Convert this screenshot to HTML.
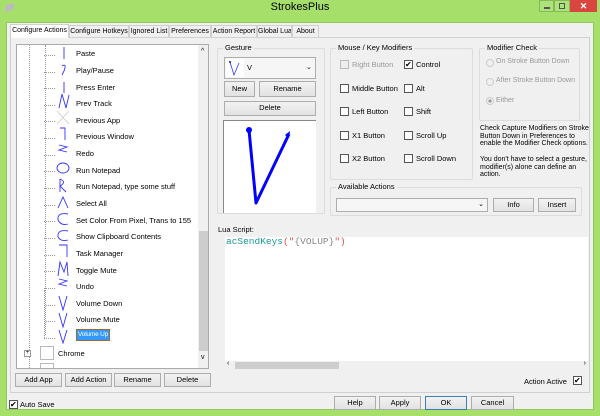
<!DOCTYPE html>
<html><head><style>
*{margin:0;padding:0;box-sizing:border-box}
body{width:600px;height:416px;overflow:hidden;background:#a6e06a;font-family:"Liberation Sans",sans-serif;font-size:7.5px;color:#000;position:relative}
.a{position:absolute}
.btn{position:absolute;background:linear-gradient(#f2f2f2,#e2e2e2);border:1px solid #adadad;text-align:center;font-size:7.5px;line-height:12px}
.grp{position:absolute;border:1px solid #dcdcdc;border-radius:2px}
.gl{position:absolute;top:-6px;left:5px;background:#f0f0f0;padding:0 2px;font-size:7.5px}
.cb{position:absolute;width:9px;height:9px;border:1px solid #555;background:#fff}
.lbl{position:absolute;font-size:7.5px;white-space:nowrap}
.item{position:absolute;left:76px;font-size:7.5px;white-space:nowrap}
.hl{position:absolute;left:44px;width:11px;border-top:1px dotted #999}
.tab{position:absolute;top:25px;height:12px;border:1px solid #d0d0d0;border-bottom:none;background:#f0f0f0;font-size:7px;line-height:11px;text-align:center;white-space:nowrap;overflow:hidden}
</style></head><body>
<div class="a" style="left:6px;top:22px;width:588px;height:388px;background:#f0f0f0;border:1px solid #8fc95a"></div>
<div class="a" style="left:0;top:1px;width:600px;text-align:center;font-size:11px;color:#000">StrokesPlus</div>
<div class="a" style="left:5px;top:4px;width:9px;height:7px;background:#bbb;border-radius:2px;transform:skewY(-20deg)"></div>
<div class="a" style="left:539px;top:0;width:15px;height:12px;border:1px solid #86b95a;background:#aee37a"><div class="a" style="left:4px;top:6px;width:6px;height:2px;border:1px solid #555"></div></div>
<div class="a" style="left:554px;top:0;width:16px;height:12px;border:1px solid #86b95a;background:#aee37a"><div class="a" style="left:4px;top:2px;width:6px;height:6px;border:1px solid #555"></div></div>
<div class="a" style="left:570px;top:0;width:27px;height:12px;background:#d9463f;color:#fff;text-align:center;font-size:9px;line-height:12px;font-weight:bold">✕</div>

<div class="a" style="left:10px;top:37px;width:580px;height:356px;border:1px solid #d0d0d0;background:#f0f0f0"></div>
<div class="tab" style="left:10px;width:59px;top:24px;height:14px;background:#fff;z-index:2">Configure Actions</div>
<div class="tab" style="left:69px;width:60px">Configure Hotkeys</div>
<div class="tab" style="left:129px;width:40px">Ignored List</div>
<div class="tab" style="left:169px;width:42px">Preferences</div>
<div class="tab" style="left:211px;width:46px">Action Report</div>
<div class="tab" style="left:257px;width:35px">Global Lua</div>
<div class="tab" style="left:292px;width:27px">About</div>

<div class="a" style="left:16px;top:44px;width:193px;height:325px;border:1px solid #aaa;background:#fff;overflow:hidden">
<div class="a" style="left:181px;top:0;width:11px;height:323px;background:#f0f0f0"></div>
<div class="a" style="left:182px;top:186px;width:9px;height:120px;background:#cdcdcd"></div>
<div class="a" style="left:184px;top:3px;font-size:7px">^</div>
<div class="a" style="left:184px;top:309px;font-size:7px">v</div>
<div class="a" style="left:12px;top:0;height:325px;border-left:1px dotted #999"></div>
<div class="a" style="left:28px;top:0;height:290px;border-left:1px dotted #999"></div>
</div>
<div class="a" style="left:76px;top:329px;width:34px;height:12px;background:#3399ff;border:1px solid #9a6a30;color:#fff;line-height:10px;white-space:nowrap;font-size:6.5px;letter-spacing:-0.2px;overflow:hidden;text-align:center">Volume Up</div>
<div class="a" style="left:24px;top:350px;width:7px;height:7px;border:1px solid #999;font-size:6px;line-height:5px;text-align:center;background:#fff">+</div>
<div class="a" style="left:40px;top:346px;width:14px;height:14px;border:1px solid #bbb;background:#fff"></div>
<div class="item" style="left:58px;top:349px">Chrome</div>
<div class="a" style="left:40px;top:363px;width:14px;height:5px;border:1px solid #bbb;border-bottom:none;background:#fff"></div>

<div class="btn" style="left:15px;top:373px;width:47px;height:14px">Add App</div>
<div class="btn" style="left:65px;top:373px;width:47px;height:14px">Add Action</div>
<div class="btn" style="left:114px;top:373px;width:47px;height:14px">Rename</div>
<div class="btn" style="left:164px;top:373px;width:47px;height:14px">Delete</div>

<div class="grp" style="left:217px;top:48px;width:108px;height:166px"><span class="gl" style="top:-6px">Gesture</span></div>
<div class="a" style="left:224px;top:57px;width:92px;height:22px;border:1px solid #adadad;background:#f6f6f6"></div>
<div class="a" style="left:226px;top:59px;width:18px;height:18px;background:#fff"><svg width="18" height="18"><path d="M4 3 L8 16 L13 4" stroke="#33f" fill="none" stroke-width="0.8"/><circle cx="4" cy="3" r="1" fill="#00f"/></svg></div>
<div class="lbl" style="left:247px;top:63px">V</div>
<div class="lbl" style="left:306px;top:63px;font-size:7px">⌄</div>
<div class="btn" style="left:224px;top:81px;width:31px;height:16px;line-height:14px">New</div>
<div class="btn" style="left:259px;top:81px;width:57px;height:16px;line-height:14px">Rename</div>
<div class="btn" style="left:224px;top:101px;width:92px;height:15px">Delete</div>
<div class="a" style="left:223px;top:120px;width:93px;height:93px;background:#fff;border-top:1px solid #888;border-left:1px solid #888">
<svg width="92" height="92"><path d="M25 9 L32 82 L65 13" stroke="#0000ff" fill="none" stroke-width="3" stroke-linejoin="round"/><circle cx="25" cy="9" r="3" fill="#00f"/><path d="M61 14 L66 10 L65 17" fill="#00f"/></svg></div>

<div class="grp" style="left:330px;top:48px;width:143px;height:132px"><span class="gl">Mouse / Key Modifiers</span></div>
<div class="cb" style="left:340px;top:60px;border-color:#bbb;background:#eee"></div><div class="lbl" style="left:352px;top:60px;color:#999">Right Button</div>
<div class="cb" style="left:404px;top:60px;font-size:8px;line-height:7px">✔</div><div class="lbl" style="left:416px;top:60px">Control</div>
<div class="cb" style="left:340px;top:84px"></div><div class="lbl" style="left:352px;top:84px">Middle Button</div>
<div class="cb" style="left:404px;top:84px"></div><div class="lbl" style="left:416px;top:84px">Alt</div>
<div class="cb" style="left:340px;top:107px"></div><div class="lbl" style="left:352px;top:107px">Left Button</div>
<div class="cb" style="left:404px;top:107px"></div><div class="lbl" style="left:416px;top:107px">Shift</div>
<div class="cb" style="left:340px;top:131px"></div><div class="lbl" style="left:352px;top:131px">X1 Button</div>
<div class="cb" style="left:404px;top:131px"></div><div class="lbl" style="left:416px;top:131px">Scroll Up</div>
<div class="cb" style="left:340px;top:154px"></div><div class="lbl" style="left:352px;top:154px">X2 Button</div>
<div class="cb" style="left:404px;top:154px"></div><div class="lbl" style="left:416px;top:154px">Scroll Down</div>

<div class="grp" style="left:479px;top:48px;width:101px;height:73px"><span class="gl">Modifier Check</span></div>
<div class="a" style="left:486px;top:59px;width:8px;height:8px;border-radius:50%;border:1px solid #ccc"></div><div class="lbl" style="left:496px;top:58px;color:#999;font-size:7px">On Stroke Button Down</div>
<div class="a" style="left:486px;top:78px;width:8px;height:8px;border-radius:50%;border:1px solid #ccc"></div><div class="lbl" style="left:496px;top:77px;color:#999;font-size:7px">After Stroke Button Down</div>
<div class="a" style="left:486px;top:97px;width:8px;height:8px;border-radius:50%;border:1px solid #ccc;background:radial-gradient(#999 35%,#f0f0f0 40%)"></div><div class="lbl" style="left:496px;top:97px;color:#999;font-size:7px">Either</div>
<div class="lbl" style="left:480px;top:125px;line-height:7.7px;font-size:7px">Check Capture Modifiers on Stroke<br>Button Down in Preferences to<br>enable the Modifier Check options.<br><br>You don't have to select a gesture,<br>modifier(s) alone can define an<br>action.</div>

<div class="grp" style="left:330px;top:187px;width:252px;height:29px"><span class="gl">Available Actions</span></div>
<div class="a" style="left:336px;top:198px;width:152px;height:14px;border:1px solid #adadad;background:#f6f6f6"><span class="a" style="right:3px;top:1px;font-size:7px">⌄</span></div>
<div class="btn" style="left:493px;top:198px;width:41px;height:14px">Info</div>
<div class="btn" style="left:538px;top:198px;width:38px;height:14px">Insert</div>

<div class="lbl" style="left:218px;top:225px;font-size:7.5px">Lua Script:</div>
<div class="a" style="left:225px;top:237px;width:363px;height:132px;background:#fff"></div>
<div class="a" style="left:226px;top:236px;font-family:'Liberation Mono',monospace;font-size:9.5px;color:#1a9999">acSendKeys<span style="color:#e05050">("</span><span style="color:#888">{VOLUP}</span><span style="color:#e05050">")</span></div>
<div class="a" style="left:225px;top:361px;width:363px;height:9px;background:#f0f0f0"><div class="a" style="left:10px;top:1px;width:104px;height:7px;background:#cdcdcd"></div><span class="a" style="left:2px;top:-1px;font-size:7px">‹</span><span class="a" style="right:2px;top:-1px;font-size:7px">›</span></div>

<div class="lbl" style="left:524px;top:377px">Action Active</div>
<div class="cb" style="left:573px;top:376px;font-size:8px;line-height:7px">✔</div>

<div class="cb" style="left:9px;top:400px;font-size:8px;line-height:7px">✔</div>
<div class="lbl" style="left:20px;top:400px">Auto Save</div>
<div class="btn" style="left:334px;top:396px;width:42px;height:14px">Help</div>
<div class="btn" style="left:379px;top:396px;width:42px;height:14px">Apply</div>
<div class="btn" style="left:425px;top:396px;width:42px;height:14px;border-color:#3c7fb1">OK</div>
<div class="btn" style="left:471px;top:396px;width:43px;height:14px">Cancel</div>

<div class="item" style="top:49px">Paste</div><div class="hl" style="top:55px"></div>
<div class="item" style="top:66px">Play/Pause</div><div class="hl" style="top:72px"></div>
<div class="item" style="top:83px">Press Enter</div><div class="hl" style="top:88px"></div>
<div class="item" style="top:99px">Prev Track</div><div class="hl" style="top:105px"></div>
<div class="item" style="top:116px">Previous App</div><div class="hl" style="top:121px"></div>
<div class="item" style="top:132px">Previous Window</div><div class="hl" style="top:138px"></div>
<div class="item" style="top:149px">Redo</div><div class="hl" style="top:155px"></div>
<div class="item" style="top:166px">Run Notepad</div><div class="hl" style="top:171px"></div>
<div class="item" style="top:182px">Run Notepad, type some stuff</div><div class="hl" style="top:188px"></div>
<div class="item" style="top:199px">Select All</div><div class="hl" style="top:205px"></div>
<div class="item" style="top:216px">Set Color From Pixel, Trans to 155</div><div class="hl" style="top:221px"></div>
<div class="item" style="top:232px">Show Clipboard Contents</div><div class="hl" style="top:238px"></div>
<div class="item" style="top:249px">Task Manager</div><div class="hl" style="top:255px"></div>
<div class="item" style="top:266px">Toggle Mute</div><div class="hl" style="top:271px"></div>
<div class="item" style="top:282px">Undo</div><div class="hl" style="top:288px"></div>
<div class="item" style="top:299px">Volume Down</div><div class="hl" style="top:305px"></div>
<div class="item" style="top:315px">Volume Mute</div><div class="hl" style="top:321px"></div>
<div class="a" style="left:44px;top:290px;height:48px;border-left:1px dotted #999"></div>
<div class="hl" style="top:338px"></div>
<svg class="a" style="left:55px;top:44px" width="18" height="300" fill="none" stroke="#33f" stroke-width="0.9">
<path d="M9 3 V15"/><path d="M7 22 Q12 19 9 27 L7 31"/><path d="M9 38 V49"/><path d="M4 64 L7 50 L11 64 L14 51"/><path d="M2 67 L14 80 M14 67 L2 80" stroke="#ccc"/><path d="M5 84 H10 V96"/><path d="M4 101 L12 103 L4 106 L12 108"/><ellipse cx="8" cy="124" rx="6" ry="5"/><path d="M5 135 V148 M5 135 Q12 138 5 142 L11 148"/><path d="M3 164 L8 153 L13 164"/><path d="M13 170 Q2 168 3 176 Q6 182 13 180"/><path d="M13 187 Q2 185 3 193 Q6 198 13 196"/><path d="M4 201 H12 V213"/><path d="M3 232 L5 218 L9 228 L12 218 L13 232"/><path d="M4 235 L12 237 L4 240 L12 242"/><path d="M4 252 L8 266 L12 252"/><path d="M4 269 L8 283 L12 269"/><path d="M4 286 L8 299 L12 286"/>
</svg>
</body></html>
